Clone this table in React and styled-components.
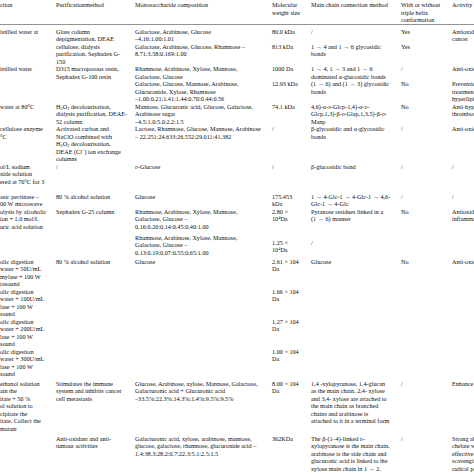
import React from "react";
import styled, { createGlobalStyle } from "styled-components";

const GlobalStyle = createGlobalStyle`
  html, body {
    margin: 0;
    padding: 0;
    background: #fff;
    overflow: hidden;
  }
  body {
    font-family: "Liberation Serif", "Times New Roman", serif;
  }
`;

// column widths of the (cropped) table, left column starts off-page
const COLS = "56px 79px 137px 39px 90px 51px 90px";
const ROWS = [15, 22.5, 15, 22.5, 22.5, 37.5, 30, 15, 26, 24, 30, 30, 30, 32, 55, 37.5];

const Page = styled.div`
  width: 474px;
  height: 474px;
  overflow: hidden;
  background: #fff;
  color: #0e0e0e;
  font-size: 6.2px;
  line-height: 7.5px;
`;

const HeaderRow = styled.div`
  display: grid;
  grid-template-columns: ${COLS};
  padding-top: 1px;
  height: 23px;
  border-bottom: 1.5px solid #939393;
`;

const Body = styled.div`
  display: grid;
  grid-template-columns: ${COLS};
  grid-template-rows: ${(p) => p.$rows};
  padding-top: 2.75px;
`;

const Cell = styled.div`
  grid-column: ${(p) => p.$col};
  grid-row: ${(p) => p.$row || "auto"} / span ${(p) => p.$span || 1};
  padding-top: ${(p) => p.$pt || 0}px;
  display: flex;
  flex-direction: column;
  white-space: nowrap;
`;

const Line = styled.span`
  display: block;
  height: 7.5px;
`;

const Sub = styled.sub`
  font-size: 4.4px;
  line-height: 0;
  vertical-align: -1px;
`;

const Sup = styled.sup`
  font-size: 4.4px;
  line-height: 0;
  vertical-align: 2.5px;
`;

const Sc = styled.span`
  font-variant: small-caps;
`;

const H2O2 = () => (
  <>
    H<Sub>2</Sub>O<Sub>2</Sub>
  </>
);

const TenFour = () => (
  <>
    10<Sup>4</Sup>Da
  </>
);

const header = [
  ["ction"],
  ["Purificationmethod"],
  ["Monosaccharide composition"],
  ["Molecular", "weight size"],
  ["Main chain connection method"],
  ["With or without", "triple helix", "conformation"],
  ["Activity"],
];

const digestion = (dose, enzyme, last) => [
  "olic digestion",
  `water + ${dose}U/mL`,
  `${enzyme} + 100 W`,
  last,
];

const cells = [
  // distilled water, first block
  { c: 1, r: 1, s: 2, lines: ["istilled water at"] },
  { c: 2, r: 1, s: 2, lines: ["Glass column", "depigmentation, DEAE", "cellulose, dialysis", "purification, Sephadex G-", "150"] },
  { c: 3, r: 1, lines: ["Galactose, Arabinose, Glucose", "–4.16:1.00:1.01"] },
  { c: 4, r: 1, lines: ["80.0 kDa"] },
  { c: 5, r: 1, lines: ["/"] },
  { c: 6, r: 1, lines: ["Yes"] },
  { c: 7, r: 1, lines: ["Antioxidant and anti-", "cancer"] },
  { c: 3, r: 2, lines: ["Galactose, Arabinose, Glucose, Rhamnose –", "8.71:3.58:0.169:1.00"] },
  { c: 4, r: 2, lines: ["813 kDa"] },
  { c: 5, r: 2, lines: ["1 → 4 and 1 → 6 glycosidic", "bonds"] },
  { c: 6, r: 2, lines: ["Yes"] },

  // distilled water, second block
  { c: 1, r: 3, s: 2, lines: ["istilled water"] },
  { c: 2, r: 3, s: 2, lines: ["D315 macroporous resin,", "Sephadex G-100 resin"] },
  { c: 3, r: 3, lines: ["Rhamnose, Arabinose, Xylose, Mannose,", "Galactose, Glucose"] },
  { c: 4, r: 3, lines: ["1000 Da"] },
  { c: 5, r: 3, lines: ["1 → 4, 1 → 3 and 1 → 6", "dominated α-glucosidic bonds"] },
  { c: 6, r: 3, lines: ["/"] },
  { c: 7, r: 3, lines: ["Anti-oxidant"] },
  { c: 3, r: 4, lines: ["Galactose, Glucose, Mannose, Arabinose,", "Glucuronide, Xylose, Rhamnose", "–1.00:0.21:1.41:1.44:0.70:0.44:0.56"] },
  { c: 4, r: 4, lines: ["12.93 kDa"] },
  { c: 5, r: 4, lines: ["(1 → 6) and (1 → 3) glycosidic", "bonds"] },
  { c: 6, r: 4, lines: ["No"] },
  { c: 7, r: 4, lines: ["Prevention and", "treatment of", "hyperlipidemia"] },

  // hot water
  { c: 1, r: 5, lines: ["water at 80°C"] },
  { c: 2, r: 5, lines: [<><H2O2 /> decolourisation,</>, "dialysis purification, DEAE-", "52 column"] },
  { c: 3, r: 5, lines: ["Mannose, Glucuronic acid, Glucose, Galactose,", "Arabinose sugar", "–4.5:1.0:5.0:2.2:1.5"] },
  { c: 4, r: 5, lines: ["74.1 kDa"] },
  {
    c: 5,
    r: 5,
    lines: [
      <>4,6)-α-<Sc>d</Sc>-Glcp-1,4)-α-<Sc>d</Sc>-</>,
      <>Glcp,1,3)-β-<Sc>d</Sc>-Glap,1,3,5)-β-<Sc>d</Sc>-</>,
      "Manp",
    ],
  },
  { c: 6, r: 5, lines: ["No"] },
  { c: 7, r: 5, lines: ["Anti-hyperlipidemic,", "thrombosis"] },

  // cellulase
  { c: 1, r: 6, lines: ["cellulose enzyme", "°C"] },
  { c: 2, r: 6, lines: ["Activated carbon and", "NaClO combined with", <><H2O2 /> decolourisation,</>, <>DEAE (Cl<Sup>−</Sup>) ion exchange</>, "columns"] },
  { c: 3, r: 6, lines: ["Lactose, Rhamnose, Glucose, Mannose, Arabinose", "– 22.251:24.633:26.552:29.011:41.382"] },
  { c: 4, r: 6, lines: ["/"] },
  { c: 5, r: 6, lines: ["β-glycosidic and α-glycosidic", "bonds"] },
  { c: 6, r: 6, lines: ["/"] },
  { c: 7, r: 6, lines: ["Anti-oxidant"] },

  // sodium hydroxide
  { c: 1, r: 7, lines: ["ol/L sodium", "xide solution", "ered at 70°C for 3"] },
  { c: 2, r: 7, lines: ["/"] },
  { c: 3, r: 7, lines: [<><Sc>d</Sc>-Glucose</>] },
  { c: 4, r: 7, lines: ["/"] },
  { c: 5, r: 7, lines: ["β-glucosidic bond"] },
  { c: 6, r: 7, lines: ["/"] },
  { c: 7, r: 7, lines: ["/"] },

  // pectinase / microwave
  { c: 1, r: 8, lines: ["asic pectinase –", "00 W microwave"] },
  { c: 2, r: 8, lines: ["80 % alcohol solution"] },
  { c: 3, r: 8, lines: ["Glucose"] },
  { c: 4, r: 8, lines: ["175.453", "kDa"] },
  { c: 5, r: 8, lines: ["1 → 4-Glc-1 → 4-Glc-1 → 4,6-", "Glc-1 → 4-Glc"] },
  { c: 6, r: 8, lines: ["/"] },
  { c: 7, r: 8, lines: ["/"] },
  { c: 1, r: 9, s: 2, lines: ["olysis by alcoholic", "ion + 1.0 mol/L", "uric acid solution"] },
  { c: 2, r: 9, s: 2, lines: ["Sephadex G-25 column"] },
  { c: 3, r: 9, lines: ["Rhamnose, Arabinose, Xylose, Mannose,", "Galactose, Glucose –", "0.16:0.20:0.14:0.45:0.40:1.00"] },
  { c: 4, r: 9, lines: ["2.80 ×", <TenFour />] },
  { c: 5, r: 9, lines: ["Pyranose residues linked in a", "(1 → 6) manner"] },
  { c: 6, r: 9, lines: ["No"] },
  { c: 7, r: 9, lines: ["Antioxidant, anti-", "inflammatory"] },
  { c: 3, r: 10, lines: ["Rhamnose, Arabinose, Xylose, Mannose,", "Galactose, Glucose –", "0.13:0.19:0.07:0.55:0.65:1.00"] },
  { c: 4, r: 10, pt: 5, lines: ["1.25 ×", <TenFour />] },
  { c: 5, r: 10, pt: 5, lines: ["/"] },

  // alcoholic digestion series
  { c: 1, r: 11, lines: digestion(50, "mylase", "rasound") },
  { c: 2, r: 11, s: 4, lines: ["80 % alcohol solution"] },
  { c: 3, r: 11, lines: ["Glucose"] },
  { c: 4, r: 11, lines: ["2.61 × 104", "Da"] },
  { c: 5, r: 11, lines: ["Glucose"] },
  { c: 6, r: 11, lines: ["No"] },
  { c: 7, r: 11, lines: ["Anti-oxidant"] },
  { c: 1, r: 12, lines: digestion(100, "lase", "sound") },
  { c: 4, r: 12, lines: ["1.66 × 104", "Da"] },
  { c: 1, r: 13, lines: digestion(200, "lase", "sound") },
  { c: 4, r: 13, lines: ["1.27 × 104", "Da"] },
  { c: 1, r: 14, lines: digestion(300, "lase", "sound") },
  { c: 4, r: 14, lines: ["1.00 × 104", "Da"] },

  // ethanol precipitation
  { c: 1, r: 15, lines: ["ethanol solution", "ain the", "itate + 50 %", "ol solution to", "cipitate the", "itate. Collect the", "matant"] },
  { c: 2, r: 15, lines: ["Stimulates the immune", "system and inhibits cancer", "cell metastasis"] },
  { c: 3, r: 15, lines: ["Glucose, Arabinose, xylose, Mannose, Galactose,", "Galacturonic acid + Glucuronic acid", "–33.5%:22.3%:14.3%:1.4%:9.5%:9.5%"] },
  { c: 4, r: 15, lines: ["8.00 × 104", "Da"] },
  {
    c: 5,
    r: 15,
    lines: [
      "1,4 -xylopyranose, 1,4-glucan",
      "as the main chain. 2,4- xylose",
      "and 3,4- xylose are attached to",
      "the main chain as branched",
      "chains and arabinose is",
      "attached to it in a terminal form",
    ],
  },
  { c: 6, r: 15, lines: ["/"] },
  { c: 7, r: 15, lines: ["Enhance immunity"] },

  // last row
  { c: 2, r: 16, lines: ["Anti-oxidant and anti-", "tumour activities"] },
  { c: 3, r: 16, lines: ["Galacturonic acid, xylose, arabinose, mannose,", "glucose, galactose, rhamnose, glucuronide acid –", "1.4:38.3:28.2:0.7:22.3:5.1:2.5:1.5"] },
  { c: 4, r: 16, lines: ["362KDa"] },
  {
    c: 5,
    r: 16,
    lines: [
      <>The β-(1–4)-linked <Sc>d</Sc>-</>,
      "xylopyranose is the main chain,",
      "arabinose is the side chain and",
      "glucuronic acid is linked to the",
      "xylose main chain in 1 → 2.",
    ],
  },
  { c: 6, r: 16, lines: ["/"] },
  { c: 7, r: 16, lines: ["Strong ability to", "chelate with", "effective", "scavenging", "radical power"] },
];

const App = () => {
  return (
    <>
      <GlobalStyle />
      <Page>
        <HeaderRow>
          {header.map((lines, i) => (
            <Cell key={i} $col={i + 1} $row={1}>
              {lines.map((t, j) => (
                <Line key={j}>{t}</Line>
              ))}
            </Cell>
          ))}
        </HeaderRow>
        <Body $rows={ROWS.map((h) => `${h}px`).join(" ")}>
          {cells.map((cell, i) => (
            <Cell key={i} $col={cell.c} $row={cell.r} $span={cell.s} $pt={cell.pt}>
              {cell.lines.map((t, j) => (
                <Line key={j}>{t}</Line>
              ))}
            </Cell>
          ))}
        </Body>
      </Page>
    </>
  );
};

export default App;
